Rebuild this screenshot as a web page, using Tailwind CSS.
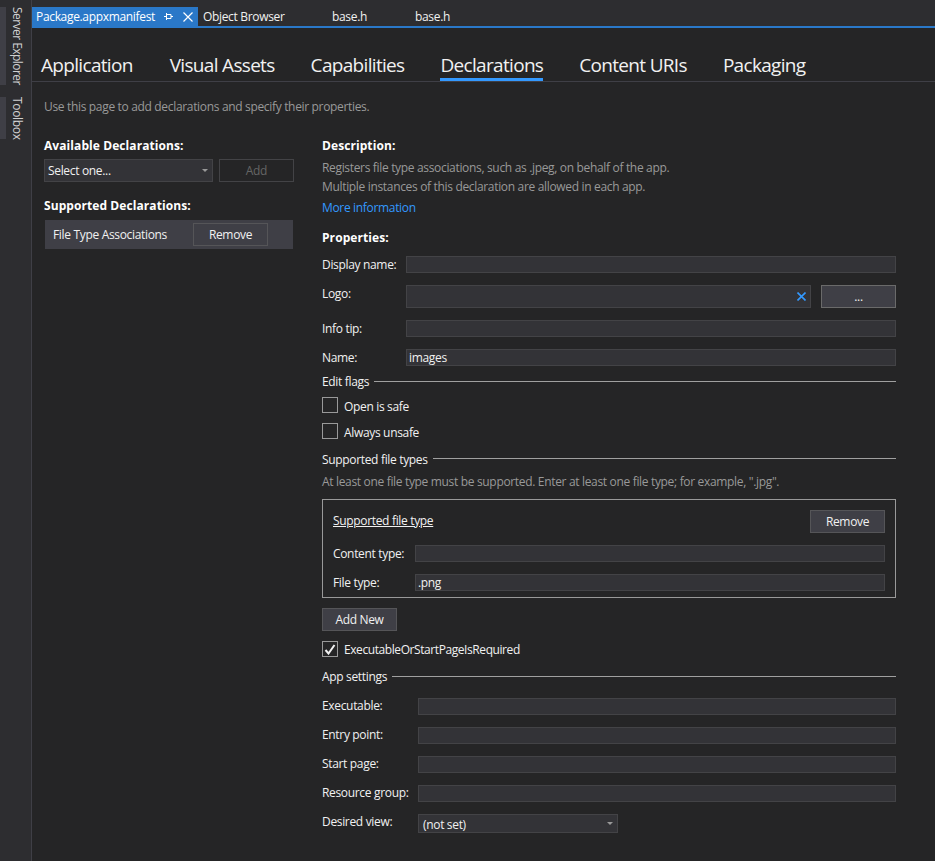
<!DOCTYPE html>
<html lang="en">
<head>
  <meta charset="UTF-8" />
  <title>Package.appxmanifest</title>
  <script src="https://cdn.jsdelivr.net/npm/@tailwindcss/browser@4"></script>
</head>
<body class="bg-[#252526] h-[861px] w-[935px] overflow-hidden flex font-['Open_Sans','Noto_Sans',sans-serif] text-[12px] tracking-[-0.33px] text-[#f1f1f1]">

  <!-- side rail -->
  <div class="w-[32px] shrink-0 bg-[#2d2d30] border-r border-[#3f3f46] flex flex-col pt-[7px] gap-[12px]">
    <div class="h-[78px] flex">
      <div class="w-[6px] bg-[#3f3f46]"></div>
      <div class="[writing-mode:vertical-rl] whitespace-nowrap pl-[3px] leading-[17px] tracking-[-0.55px] text-[#d0d0d0]">Server Explorer</div>
    </div>
    <div class="h-[42px] flex">
      <div class="w-[6px] bg-[#3f3f46]"></div>
      <div class="[writing-mode:vertical-rl] whitespace-nowrap pl-[3px] leading-[17px] text-[#d0d0d0]">Toolbox</div>
    </div>
  </div>

  <div class="flex-1 min-w-0">
    <!-- document tabs -->
    <div class="bg-[#2d2d30] h-[28px] pt-[7px] border-b-2 border-[#2a78c8] box-border flex leading-[19px]">
      <div class="w-[166px] bg-[#2a78c8] text-white pl-[4px] flex items-center h-[19px]">
        <span>Package.appxmanifest</span>
        <svg class="ml-[9px]" width="9" height="7" viewBox="0 0 9 7" fill="none" stroke="#fff"><path d="M0 3.500h2.500M2.500 0v7M2.500 1.500h4.500v4H2.500M7 3.500h2"/></svg>
        <svg class="ml-[10px]" width="10" height="10" viewBox="0 0 10 10" fill="none" stroke="#fff" stroke-width="1.200"><path d="M.5.5l9 9M9.500.5l-9 9"/></svg>
      </div>
      <span class="ml-[5px] w-[129px]">Object Browser</span>
      <span class="w-[83px]">base.h</span>
      <span>base.h</span>
    </div>

    <!-- page tabs -->
    <div class="h-[54px] border-b border-[#3f3f46] flex pl-[9px] gap-[36px] text-[19px] tracking-[-0.68px] text-[#f1f1f1] pt-[23px] leading-[28px]">
      <span class="mr-[1px]">Application</span>
      <span>Visual Assets</span>
      <span>Capabilities</span>
      <span class="h-[30px] border-b-[3px] border-[#3399ff]">Declarations</span>
      <span>Content URIs</span>
      <span>Packaging</span>
    </div>

    <div class="pl-[12px] pt-[16px] text-[#999999] leading-[17px]">Use this page to add declarations and specify their properties.</div>

    <div class="flex pl-[12px] pt-[22px]">
      <!-- left column -->
      <div class="w-[250px] shrink-0 mr-[28px]">
        <div class="font-bold tracking-[0.08px] text-white leading-[17px]">Available Declarations:</div>
        <div class="flex mt-[5px] gap-[6px]">
          <div class="w-[169px] h-[23px] bg-[#333337] border border-[#434346] flex items-center justify-between pl-[3px] pr-[4px]">
            <span>Select one...</span>
            <span class="w-0 h-0 border-x-[3px] border-x-transparent border-t-[3px] border-t-[#999999]"></span>
          </div>
          <div class="w-[75px] h-[23px] border border-[#434346] flex items-center justify-center text-[#656565]">Add</div>
        </div>
        <div class="font-bold tracking-[0.08px] text-white leading-[17px] mt-[15px]">Supported Declarations:</div>
        <div class="mt-[6px] h-[29px] w-[248px] ml-[1px] bg-[#3f3f46] flex items-center pl-[8px]">
          <span class="w-[140px]">File Type Associations</span>
          <div class="w-[75px] h-[23px] bg-[#3f3f46] border border-[#555558] flex items-center justify-center">Remove</div>
        </div>
      </div>

      <!-- right column -->
      <div class="w-[574px] shrink-0 leading-[17px]">
        <div class="font-bold tracking-[0.08px] text-white">Description:</div>
        <div class="mt-[5px] text-[#999999]">Registers file type associations, such as .jpeg, on behalf of the app.</div>
        <div class="mt-[2px] text-[#999999]">Multiple instances of this declaration are allowed in each app.</div>
        <div class="mt-[4px] text-[#3399ff]">More information</div>
        <div class="mt-[13px] font-bold tracking-[0.08px] text-white">Properties:</div>

        <div class="mt-[10px] flex h-[17px]">
          <span class="w-[84px]">Display name:</span>
          <div class="flex-1 bg-[#333337] border border-[#434346]"></div>
        </div>
        <div class="mt-[12px] flex h-[23px]">
          <span class="w-[84px]">Logo:</span>
          <div class="w-[405px] bg-[#333337] border border-[#434346] flex items-center justify-end pr-[4px]">
            <svg width="9" height="9" viewBox="0 0 9 9" fill="none" stroke="#3399ff" stroke-width="1.600"><path d="M.5.5l8 8M8.500.5l-8 8"/></svg>
          </div>
          <div class="ml-[10px] flex-1 bg-[#3f3f46] border border-[#6a6a6a] flex items-center justify-center">...</div>
        </div>
        <div class="mt-[12px] flex h-[17px]">
          <span class="w-[84px]">Info tip:</span>
          <div class="flex-1 bg-[#333337] border border-[#434346]"></div>
        </div>
        <div class="mt-[12px] flex h-[17px]">
          <span class="w-[84px]">Name:</span>
          <div class="flex-1 bg-[#333337] border border-[#434346] pl-[2px] leading-[16px]">images</div>
        </div>

        <div class="mt-[7px] flex items-center h-[17px]">
          <span>Edit flags</span>
          <div class="flex-1 ml-[5px] h-px bg-[#a0a0a0]"></div>
        </div>
        <div class="mt-[7px] flex items-center h-[16px]">
          <div class="w-[16px] h-[16px] border border-[#999999]"></div>
          <span class="ml-[6px] pt-[2px]">Open is safe</span>
        </div>
        <div class="mt-[10px] flex items-center h-[16px]">
          <div class="w-[16px] h-[16px] border border-[#999999]"></div>
          <span class="ml-[6px] pt-[2px]">Always unsafe</span>
        </div>

        <div class="mt-[11px] flex items-center h-[17px]">
          <span class="pt-[2px]">Supported file types</span>
          <div class="flex-1 ml-[5px] h-px bg-[#a0a0a0]"></div>
        </div>
        <div class="mt-[6px] text-[#999999]">At least one file type must be supported. Enter at least one file type; for example, ".jpg".</div>

        <div class="mt-[9px] h-[99px] border border-[#999999] pl-[10px] pr-[10px] pt-[10px]">
          <div class="flex items-center justify-between h-[23px]">
            <span class="underline pb-[3px]">Supported file type</span>
            <div class="w-[75px] h-[23px] bg-[#3f3f46] border border-[#555558] flex items-center justify-center">Remove</div>
          </div>
          <div class="mt-[12px] flex h-[17px]">
            <span class="w-[82px]">Content type:</span>
            <div class="flex-1 bg-[#333337] border border-[#434346]"></div>
          </div>
          <div class="mt-[12px] flex h-[17px]">
            <span class="w-[82px]">File type:</span>
            <div class="flex-1 bg-[#333337] border border-[#434346] pl-[2px] leading-[16px]">.png</div>
          </div>
        </div>

        <div class="mt-[10px] w-[75px] h-[23px] bg-[#3f3f46] border border-[#555558] flex items-center justify-center">Add New</div>
        <div class="mt-[10px] flex items-center h-[16px]">
          <div class="w-[16px] h-[16px] border border-[#999999] flex items-center justify-center">
            <svg width="12" height="11" viewBox="0 0 12 11" fill="none" stroke="#f1f1f1" stroke-width="2"><path d="M1.500 6l3 3.500L10.500 1"/></svg>
          </div>
          <span class="ml-[6px] tracking-[-0.42px]">ExecutableOrStartPageIsRequired</span>
        </div>

        <div class="mt-[11px] flex items-center h-[17px]">
          <span>App settings</span>
          <div class="flex-1 ml-[5px] h-px bg-[#a0a0a0]"></div>
        </div>
        <div class="mt-[13px] flex h-[17px]">
          <span class="w-[96px] leading-[15px]">Executable:</span>
          <div class="flex-1 bg-[#333337] border border-[#434346]"></div>
        </div>
        <div class="mt-[12px] flex h-[17px]">
          <span class="w-[96px] leading-[15px]">Entry point:</span>
          <div class="flex-1 bg-[#333337] border border-[#434346]"></div>
        </div>
        <div class="mt-[12px] flex h-[17px]">
          <span class="w-[96px] leading-[15px]">Start page:</span>
          <div class="flex-1 bg-[#333337] border border-[#434346]"></div>
        </div>
        <div class="mt-[12px] flex h-[17px]">
          <span class="w-[96px] leading-[15px]">Resource group:</span>
          <div class="flex-1 bg-[#333337] border border-[#434346]"></div>
        </div>
        <div class="mt-[12px] flex h-[19px]">
          <span class="w-[96px] leading-[15px]">Desired view:</span>
          <div class="w-[200px] bg-[#333337] border border-[#434346] flex items-center justify-between pl-[4px] pr-[4px]">
            <span class="pt-[2px]">(not set)</span>
            <span class="w-0 h-0 border-x-[3px] border-x-transparent border-t-[3px] border-t-[#999999]"></span>
          </div>
        </div>
      </div>
    </div>
  </div>
</body>
</html>
